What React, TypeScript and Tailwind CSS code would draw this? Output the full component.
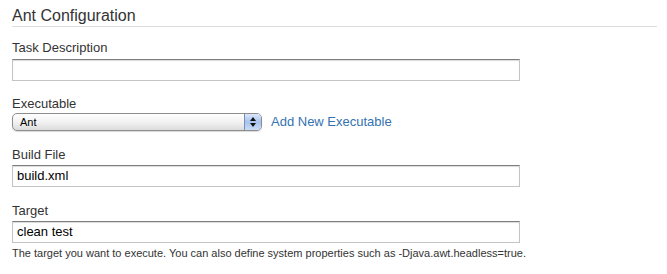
import React from "react";

const font = { fontFamily: '"Liberation Sans", Arial, Helvetica, sans-serif' };

function TextInput({ value }: { value?: string }) {
  return (
    <div className="w-[508px] h-[22px] border border-[#c4c4c4] border-t-[#7e7e7e] bg-white shadow-[inset_0_1px_1px_rgba(0,0,0,0.15)] flex items-center px-[4px] text-[13px] text-black leading-[16px]">
      {value}
    </div>
  );
}

export default function App() {
  return (
    <div style={font} className="w-[667px] h-[274px] bg-white px-[12px] pt-[6px] overflow-hidden">
      <div className="w-[645px] text-[16px] leading-[20px] text-[#333] border-b border-[#dddddd]">
        Ant Configuration
      </div>

      <div className="mt-[13px]">
        <div className="text-[13px] leading-[16px] text-[#333] mb-[3px]">Task Description</div>
        <TextInput />
      </div>

      <div className="mt-[15px]">
        <div className="text-[13px] leading-[16px] text-[#333] mb-[1px]">Executable</div>
        <div className="flex items-center gap-[9px]">
          <div className="relative w-[250px] h-[18px] rounded-[5px] border border-[#8d8d8d] bg-gradient-to-b from-[#ffffff] via-[#f2f2f2] to-[#dcdcdc] shadow-[0_1px_1px_rgba(0,0,0,0.15)] flex items-center overflow-hidden">
            <span className="pl-[7px] text-[11px] leading-[14px] text-black">Ant</span>
            <div className="absolute right-0 top-0 bottom-0 w-[17px] border-l border-[#7a8fb5] bg-gradient-to-b from-[#dbe7f9] via-[#a6c3ee] to-[#c9dbf6] flex flex-col items-center justify-center gap-[2px]">
              <svg width="6" height="4" viewBox="0 0 6 4"><path d="M3 0L6 4H0z" fill="#111" /></svg>
              <svg width="6" height="4" viewBox="0 0 6 4"><path d="M0 0h6L3 4z" fill="#111" /></svg>
            </div>
          </div>
          <a className="text-[13px] leading-[16px] text-[#3572b0] no-underline cursor-pointer">Add New Executable</a>
        </div>
      </div>

      <div className="mt-[16px]">
        <div className="text-[13px] leading-[16px] text-[#333] mb-[2px]">Build File</div>
        <TextInput value="build.xml" />
      </div>

      <div className="mt-[16px]">
        <div className="text-[13px] leading-[16px] text-[#333] mb-[2px]">Target</div>
        <TextInput value="clean test" />
        <div className="mt-[3px] text-[11px] leading-[14px] text-[#333]">
          The target you want to execute. You can also define system properties such as -Djava.awt.headless=true.
        </div>
      </div>
    </div>
  );
}
